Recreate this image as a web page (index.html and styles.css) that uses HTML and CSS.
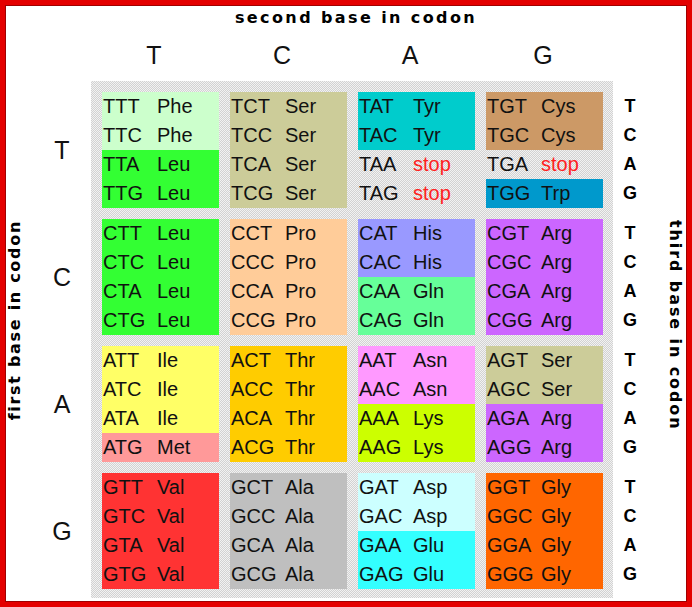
FILE: index.html
```html
<!DOCTYPE html>
<html lang="en">
<head>
<meta charset="utf-8">
<title>Genetic code table</title>
<link rel="stylesheet" href="styles.css">
</head>
<body>
<div class="frame">
  <div class="title">second base in codon</div>
  <div class="col-heads"><span>T</span><span>C</span><span>A</span><span>G</span></div>
  <div class="side-left">first base in codon</div>
  <div class="row-heads"><span>T</span><span>C</span><span>A</span><span>G</span></div>
  <div class="table">
    <div class="block">
      <div class="ln phe"><span class="cd">TTT</span><span>Phe</span></div>
      <div class="ln phe"><span class="cd">TTC</span><span>Phe</span></div>
      <div class="ln leu"><span class="cd">TTA</span><span>Leu</span></div>
      <div class="ln leu"><span class="cd">TTG</span><span>Leu</span></div>
    </div>
    <div class="block">
      <div class="ln ser"><span class="cd">TCT</span><span>Ser</span></div>
      <div class="ln ser"><span class="cd">TCC</span><span>Ser</span></div>
      <div class="ln ser"><span class="cd">TCA</span><span>Ser</span></div>
      <div class="ln ser"><span class="cd">TCG</span><span>Ser</span></div>
    </div>
    <div class="block">
      <div class="ln tyr"><span class="cd">TAT</span><span>Tyr</span></div>
      <div class="ln tyr"><span class="cd">TAC</span><span>Tyr</span></div>
      <div class="ln"><span class="cd">TAA</span><span class="stop">stop</span></div>
      <div class="ln"><span class="cd">TAG</span><span class="stop">stop</span></div>
    </div>
    <div class="block">
      <div class="ln cys"><span class="cd">TGT</span><span>Cys</span></div>
      <div class="ln cys"><span class="cd">TGC</span><span>Cys</span></div>
      <div class="ln"><span class="cd">TGA</span><span class="stop">stop</span></div>
      <div class="ln trp"><span class="cd">TGG</span><span>Trp</span></div>
    </div>

    <div class="block">
      <div class="ln leu"><span class="cd">CTT</span><span>Leu</span></div>
      <div class="ln leu"><span class="cd">CTC</span><span>Leu</span></div>
      <div class="ln leu"><span class="cd">CTA</span><span>Leu</span></div>
      <div class="ln leu"><span class="cd">CTG</span><span>Leu</span></div>
    </div>
    <div class="block">
      <div class="ln pro"><span class="cd">CCT</span><span>Pro</span></div>
      <div class="ln pro"><span class="cd">CCC</span><span>Pro</span></div>
      <div class="ln pro"><span class="cd">CCA</span><span>Pro</span></div>
      <div class="ln pro"><span class="cd">CCG</span><span>Pro</span></div>
    </div>
    <div class="block">
      <div class="ln his"><span class="cd">CAT</span><span>His</span></div>
      <div class="ln his"><span class="cd">CAC</span><span>His</span></div>
      <div class="ln gln"><span class="cd">CAA</span><span>Gln</span></div>
      <div class="ln gln"><span class="cd">CAG</span><span>Gln</span></div>
    </div>
    <div class="block">
      <div class="ln arg"><span class="cd">CGT</span><span>Arg</span></div>
      <div class="ln arg"><span class="cd">CGC</span><span>Arg</span></div>
      <div class="ln arg"><span class="cd">CGA</span><span>Arg</span></div>
      <div class="ln arg"><span class="cd">CGG</span><span>Arg</span></div>
    </div>

    <div class="block">
      <div class="ln ile"><span class="cd">ATT</span><span>Ile</span></div>
      <div class="ln ile"><span class="cd">ATC</span><span>Ile</span></div>
      <div class="ln ile"><span class="cd">ATA</span><span>Ile</span></div>
      <div class="ln met"><span class="cd">ATG</span><span>Met</span></div>
    </div>
    <div class="block">
      <div class="ln thr"><span class="cd">ACT</span><span>Thr</span></div>
      <div class="ln thr"><span class="cd">ACC</span><span>Thr</span></div>
      <div class="ln thr"><span class="cd">ACA</span><span>Thr</span></div>
      <div class="ln thr"><span class="cd">ACG</span><span>Thr</span></div>
    </div>
    <div class="block">
      <div class="ln asn"><span class="cd">AAT</span><span>Asn</span></div>
      <div class="ln asn"><span class="cd">AAC</span><span>Asn</span></div>
      <div class="ln lys"><span class="cd">AAA</span><span>Lys</span></div>
      <div class="ln lys"><span class="cd">AAG</span><span>Lys</span></div>
    </div>
    <div class="block">
      <div class="ln ser"><span class="cd">AGT</span><span>Ser</span></div>
      <div class="ln ser"><span class="cd">AGC</span><span>Ser</span></div>
      <div class="ln arg"><span class="cd">AGA</span><span>Arg</span></div>
      <div class="ln arg"><span class="cd">AGG</span><span>Arg</span></div>
    </div>

    <div class="block">
      <div class="ln val"><span class="cd">GTT</span><span>Val</span></div>
      <div class="ln val"><span class="cd">GTC</span><span>Val</span></div>
      <div class="ln val"><span class="cd">GTA</span><span>Val</span></div>
      <div class="ln val"><span class="cd">GTG</span><span>Val</span></div>
    </div>
    <div class="block">
      <div class="ln ala"><span class="cd">GCT</span><span>Ala</span></div>
      <div class="ln ala"><span class="cd">GCC</span><span>Ala</span></div>
      <div class="ln ala"><span class="cd">GCA</span><span>Ala</span></div>
      <div class="ln ala"><span class="cd">GCG</span><span>Ala</span></div>
    </div>
    <div class="block">
      <div class="ln asp"><span class="cd">GAT</span><span>Asp</span></div>
      <div class="ln asp"><span class="cd">GAC</span><span>Asp</span></div>
      <div class="ln glu"><span class="cd">GAA</span><span>Glu</span></div>
      <div class="ln glu"><span class="cd">GAG</span><span>Glu</span></div>
    </div>
    <div class="block">
      <div class="ln gly"><span class="cd">GGT</span><span>Gly</span></div>
      <div class="ln gly"><span class="cd">GGC</span><span>Gly</span></div>
      <div class="ln gly"><span class="cd">GGA</span><span>Gly</span></div>
      <div class="ln gly"><span class="cd">GGG</span><span>Gly</span></div>
    </div>
  </div>
  <div class="third">
    <div class="tblock"><span>T</span><span>C</span><span>A</span><span>G</span></div>
    <div class="tblock"><span>T</span><span>C</span><span>A</span><span>G</span></div>
    <div class="tblock"><span>T</span><span>C</span><span>A</span><span>G</span></div>
    <div class="tblock"><span>T</span><span>C</span><span>A</span><span>G</span></div>
  </div>
  <div class="side-right">third base in codon</div>
</div>
</body>
</html>
```

FILE: styles.css
```css
html, body {
  margin: 0;
  padding: 0;
  background: #ffffff;
}

.frame {
  box-sizing: border-box;
  width: 692px;
  height: 607px;
  border: 5px solid #e40000;
  padding: 1px;
  box-shadow: inset 0 0 0 1px #a00000;
  background: #ffffff;
  display: grid;
  grid-template-columns: 18px 67px 522px 34px 39px;
  grid-template-rows: 24px 51px 517px;
  grid-template-areas:
    ". . title . ."
    ". . heads . ."
    "left rows table third right";
  font-family: "Liberation Sans", Arial, sans-serif;
  color: #111111;
}

.title {
  grid-area: title;
  font-family: "DejaVu Sans", sans-serif;
  font-weight: bold;
  font-size: 16px;
  line-height: 24px;
  letter-spacing: 2.4px;
  text-align: center;
  padding-left: 8px;
  white-space: nowrap;
  color: #000000;
}

.col-heads {
  grid-area: heads;
  display: grid;
  grid-template-columns: repeat(4, 117px);
  column-gap: 11px;
  padding-left: 11px;
  align-items: center;
  font-size: 25px;
}

.col-heads span {
  text-align: center;
  padding-right: 13px;
}

.col-heads span:last-child {
  padding-right: 3px;
}

.side-left {
  grid-area: left;
  writing-mode: vertical-rl;
  transform: rotate(180deg);
  font-family: "DejaVu Sans", sans-serif;
  font-weight: bold;
  font-size: 16px;
  line-height: 16px;
  letter-spacing: 1.7px;
  white-space: nowrap;
  align-self: start;
  justify-self: center;
  margin-top: 139px;
  color: #000000;
}

.side-right {
  grid-area: right;
  writing-mode: vertical-rl;
  font-family: "DejaVu Sans", sans-serif;
  font-weight: bold;
  font-size: 16px;
  line-height: 16px;
  letter-spacing: 1.9px;
  white-space: nowrap;
  align-self: start;
  justify-self: end;
  margin-top: 139px;
  margin-right: 3px;
  color: #000000;
}

.row-heads {
  grid-area: rows;
  display: grid;
  grid-template-rows: repeat(4, 116px);
  row-gap: 11px;
  padding-top: 11px;
  padding-left: 9px;
  font-size: 25px;
}

.row-heads span {
  display: flex;
  align-items: center;
  justify-content: center;
}

.table {
  grid-area: table;
  display: grid;
  grid-template-columns: repeat(4, 117px);
  grid-template-rows: repeat(4, 116px);
  gap: 11px;
  padding: 11px 10px 9px 11px;
  background: repeating-conic-gradient(#d2d2d2 0 25%, #f2f2f2 0 50%) 0 0 / 2px 2px;
}

.block {
  display: grid;
  grid-template-rows: repeat(4, 29px);
}

.ln {
  display: flex;
  font-size: 20px;
  line-height: 29px;
  white-space: nowrap;
  padding-left: 1px;
}

.cd {
  width: 54px;
  flex: none;
}

.stop {
  color: #ff2121;
}

.third {
  grid-area: third;
  display: grid;
  grid-template-rows: repeat(4, 116px);
  row-gap: 11px;
  padding-top: 11px;
}

.tblock {
  display: grid;
  grid-template-rows: repeat(4, 29px);
  font-weight: bold;
  font-size: 18px;
  line-height: 29px;
  text-align: center;
  color: #000000;
}

.phe { background: #ccffcc; }
.leu { background: #33ff33; }
.ser { background: #cccc99; }
.tyr { background: #00cccc; }
.cys { background: #cc9966; }
.trp { background: #0099cc; }
.pro { background: #ffcc99; }
.his { background: #9999ff; }
.gln { background: #66ff99; }
.arg { background: #cc66ff; }
.ile { background: #ffff66; }
.met { background: #ff9999; }
.thr { background: #ffcc00; }
.asn { background: #ff99ff; }
.lys { background: #ccff00; }
.val { background: #ff3333; }
.ala { background: #bfbfbf; }
.asp { background: #ccffff; }
.glu { background: #33ffff; }
.gly { background: #ff6600; }
```
